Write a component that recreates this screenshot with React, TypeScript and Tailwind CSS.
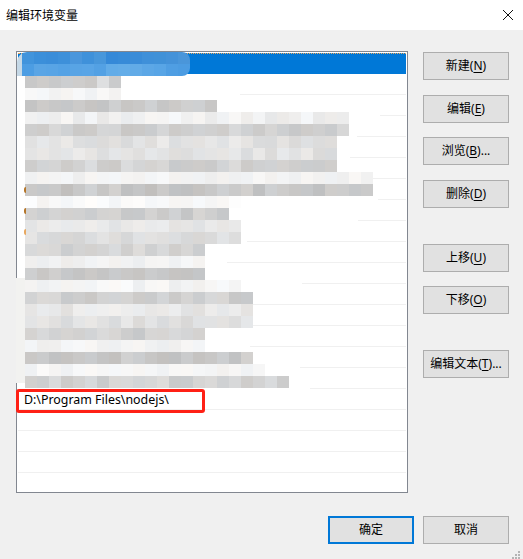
import React from "react";

const FONT = "font-['Noto_Sans','Noto_Sans_CJK_SC',sans-serif]";

const lineStart: Record<number, number> = {
  1: 240, 2: 380, 3: 357, 4: 350, 5: 373, 6: 378, 7: 358, 8: 247, 9: 227, 10: 302, 11: 253, 12: 253, 13: 250, 14: 300, 15: 310,
};

// [blocks, base grey, spread]
const mosaic: [number, number, number][] = [
  [8, 212, 12], [8, 245, 4], [16, 202, 7], [27, 240, 8], [27, 208, 9], [26, 226, 9], [26, 226, 9], [26, 212, 11],
  [29, 243, 5], [29, 200, 10], [18, 249, 6], [17, 205, 9], [18, 232, 6], [18, 221, 8], [15, 212, 8], [15, 240, 7],
  [15, 200, 8], [18, 244, 7], [19, 208, 9], [19, 232, 8], [19, 224, 8], [15, 210, 10], [15, 243, 5], [19, 201, 9],
  [20, 245, 6], [22, 211, 10],
];

function cellColor(r: number, c: number, base: number, spread: number) {
  const v = Math.sin(r * 12.9898 + c * 78.233) * 43758.5453;
  const f = v - Math.floor(v);
  const g = Math.min(253, Math.round(base + (f - 0.5) * spread * 2));
  const tint = Math.round(Math.sin(r * 3.1 + c * 1.7) * 2);
  return `rgb(${g + tint},${g},${g - tint})`;
}

const blueTop = ["#4194dc", "#3b8fda", "#3a8dd9", "#3d90da", "#4a96dc", "#3f91da", "#4897db", "#3589d8", "#378bd8", "#3a8cd8", "#3f90d9", "#4091d8", "#4492d9", "#4a96da"];
const blueBottom = ["#4c9de3", "#5aa5e5", "#58a4e5", "#54a2e5", "#58a4e5", "#59a5e6", "#53a1e4", "#62ace8", "#64ade8", "#62abe7", "#5ca7e6", "#58a5e6", "#4f9ee3", "#4c9ce2"];

function Btn({ label, m, suffix = "", cls = "", primary = false }: { label: string; m?: string; suffix?: string; cls?: string; primary?: boolean }) {
  return (
    <button
      className={`w-[86px] h-[28px] shrink-0 bg-[#e1e1e1] text-[12px] text-black flex items-center justify-center whitespace-pre ${
        primary ? "border-2 border-[#0078d7]" : "border border-[#adadad]"
      } ${cls}`}
    >
      {label}
      {m && (
        <>
          (<span className="underline underline-offset-2">{m}</span>){suffix}
        </>
      )}
    </button>
  );
}

export default function App() {
  return (
    <div className={`relative w-[523px] h-[559px] flex flex-col bg-[#f0f0f0] overflow-hidden ${FONT}`}>
      <div className="h-[30px] shrink-0 bg-white flex items-center justify-between pl-[6px] pr-[10px]">
        <span className="text-[12px] text-black pt-[1px]">编辑环境变量</span>
        <svg width="10" height="10" viewBox="0 0 10 10" fill="none" stroke="#111" strokeWidth="1">
          <path d="M0 0L10 10M10 0L0 10" />
        </svg>
      </div>

      <div className="flex pl-4 pt-[21px]">
        <div className="relative w-[392px] h-[442px] shrink-0 border border-[#828790] bg-white p-[1px]">
          <div className="h-full overflow-hidden">
            <div className="h-[21px] bg-[#0078d7] border-t border-dotted border-[#e8a860]" />
            {Array.from({ length: 20 }, (_, i) => i + 1).map((i) => (
              <div key={i} className="relative h-[21px]">
                {i === 16 && (
                  <div className="pl-[6px] pt-[1px] h-[21px] flex items-center text-[12.4px] text-black leading-none whitespace-pre">
                    {"D:\\Program Files\\nodejs\\"}
                  </div>
                )}
                <div
                  className="absolute bottom-0 right-0 h-[1px] bg-[#f0f0f0]"
                  style={{ left: lineStart[i] ? lineStart[i] - 18 : 0 }}
                />
              </div>
            ))}
          </div>

          {/* blurred (redacted) selected entry */}
          <div className="absolute left-0 top-0 w-[173px] h-[24px] flex overflow-hidden rounded-tl-[10px] rounded-br-[8px] rounded-tr-[8px]">
            <div className="w-[8px] h-full bg-[#c5d8e6]" />
            <div className="flex flex-col">
              <div className="flex h-[12px]">
                {blueTop.map((c, i) => (
                  <div key={i} className="w-[12px] h-full" style={{ background: c }} />
                ))}
              </div>
              <div className="flex h-[12px]">
                {blueBottom.map((c, i) => (
                  <div key={i} className="w-[12px] h-full" style={{ background: c }} />
                ))}
              </div>
            </div>
          </div>

          {/* blurred (redacted) entries */}
          <div className="absolute left-[8px] top-[24px] flex flex-col">
            {mosaic.map(([n, base, spread], r) => (
              <div key={r} className="flex h-[12px]">
                {Array.from({ length: n }, (_, c) => (
                  <div key={c} className="w-[12px] h-full" style={{ background: cellColor(r, c, base, spread) }} />
                ))}
              </div>
            ))}
          </div>

          <div className="absolute left-[7px] top-[135px] w-[2px] h-[6px] bg-[#b5762a] rounded-l-full" />
          <div className="absolute left-[7px] top-[156px] w-[2px] h-[6px] bg-[#b5762a] rounded-l-full" />
          <div className="absolute left-[7px] top-[177px] w-[2px] h-[6px] bg-[#e8a860] rounded-l-full" />

          {/* smear over the list's left edge */}
          <div className="absolute left-[-1px] top-[226px] w-[9px] h-[105px] bg-[#f2f2f0]" />

          {/* highlight */}
          <div className="absolute left-[-1px] top-[337px] w-[189px] h-[24px] border-[3px] border-[#ff2015] rounded-[3px]" />
        </div>

        <div className="ml-[15px] pt-[1px] flex flex-col">
          <Btn label="新建" m="N" />
          <Btn label="编辑" m="E" cls="mt-[15px]" />
          <Btn label="浏览" m="B" suffix="..." cls="mt-[14px]" />
          <Btn label="删除" m="D" cls="mt-[15px]" />
          <Btn label="上移" m="U" cls="mt-[36px]" />
          <Btn label="下移" m="O" cls="mt-[14px]" />
          <Btn label="编辑文本" m="T" suffix="..." cls="mt-[36px]" />
        </div>
      </div>

      <div className="mt-[23px] flex justify-end gap-[9px] pr-[14px]">
        <Btn label="确定" primary />
        <Btn label="取消" />
      </div>

      <svg className="absolute right-[2px] bottom-0" width="9" height="8" viewBox="0 0 9 8" fill="#b4b4b4">
        <rect x="6" y="0" width="2" height="2" />
        <rect x="3" y="3" width="2" height="2" />
        <rect x="6" y="3" width="2" height="2" />
        <rect x="0" y="6" width="2" height="2" />
        <rect x="3" y="6" width="2" height="2" />
        <rect x="6" y="6" width="2" height="2" />
      </svg>
    </div>
  );
}
